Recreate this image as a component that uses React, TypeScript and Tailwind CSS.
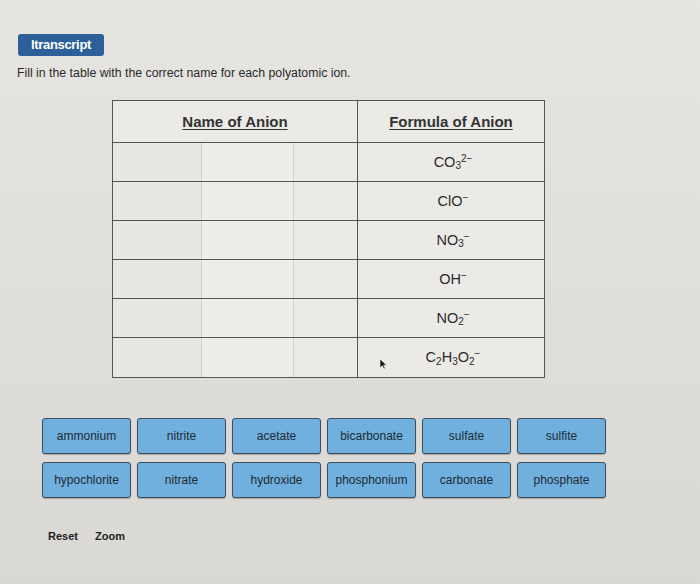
import React from "react";

const names = [
  ["ammonium", "nitrite", "acetate", "bicarbonate", "sulfate", "sulfite"],
  ["hypochlorite", "nitrate", "hydroxide", "phosphonium", "carbonate", "phosphate"],
];

const formulas: React.ReactNode[] = [
  <>CO<sub className="text-[10px]">3</sub><sup className="text-[10px]">2−</sup></>,
  <>ClO<sup className="text-[10px]">−</sup></>,
  <>NO<sub className="text-[10px]">3</sub><sup className="text-[10px]">−</sup></>,
  <>OH<sup className="text-[10px]">−</sup></>,
  <>NO<sub className="text-[10px]">2</sub><sup className="text-[10px]">−</sup></>,
  <>C<sub className="text-[10px]">2</sub>H<sub className="text-[10px]">3</sub>O<sub className="text-[10px]">2</sub><sup className="text-[10px]">−</sup></>,
];

export default function App() {
  return (
    <div className="w-[700px] h-[584px] bg-gradient-to-b from-[#e7e5e2] to-[#dad8d4] font-['Liberation_Sans',Arial,sans-serif] text-[#222] relative overflow-hidden">
      {/* HEADER */}
      <div className="pt-[32px] pl-[18px]">
        <div className="inline-flex items-center justify-center w-[86px] h-[22px] bg-[#2d5f98] rounded-[3px] text-white text-[13px] font-bold tracking-tight">
          ltranscript
        </div>
        <p className="mt-[8px] -ml-[1px] text-[12.3px] text-[#2a2a2a]">
          Fill in the table with the correct name for each polyatomic ion.
        </p>
      </div>

      {/* TABLE */}
      <div className="ml-[112px] mt-[18px] w-[433px] border border-[#555] bg-[#eceae7]">
        <div className="grid grid-cols-[245px_1fr] h-[42px] border-b border-[#555]">
          <div className="flex items-center justify-center border-r border-[#555]">
            <span className="text-[15px] font-semibold underline underline-offset-2 text-[#333]">
              Name of Anion
            </span>
          </div>
          <div className="flex items-center justify-center">
            <span className="text-[15px] font-semibold underline underline-offset-2 text-[#333]">
              Formula of Anion
            </span>
          </div>
        </div>
        {formulas.map((f, i) => (
          <div
            key={i}
            className={`grid grid-cols-[245px_1fr] h-[39px] ${i < 5 ? "border-b border-[#555]" : ""}`}
          >
            <div className="grid grid-cols-[88px_93px_1fr] border-r border-[#555]">
              <div className="bg-[#e8e7e4]" />
              <div className="bg-[#eeedea] border-x border-[#d2d0cc]" />
              <div className="bg-[#ebeae7]" />
            </div>
            <div className="relative flex items-center justify-center text-[14.5px] text-[#2a2a2a]">
              <span className="pl-[4px]">{f}</span>
              {i === 5 && (
                <svg className="absolute left-[21px] top-[20px]" width="9" height="12" viewBox="0 0 9 12">
                  <path d="M1 1 L1 10 L3.2 7.8 L5 11 L6.3 10.3 L4.6 7.2 L7.6 7.2 Z" fill="#111" stroke="#fff" strokeWidth="0.6" />
                </svg>
              )}
            </div>
          </div>
        ))}
      </div>

      {/* WORD BANK */}
      <div className="ml-[42px] mt-[40px] flex flex-col gap-[8px]">
        {names.map((row, r) => (
          <div key={r} className="flex gap-[6px]">
            {row.map((n) => (
              <div
                key={n}
                className="w-[89px] h-[36px] flex items-center justify-center bg-[#6fb0de] border border-[#3d4f5d] rounded-[3px] shadow-[0_1px_1px_rgba(0,0,0,0.25)] text-[12px] text-[#1f2a33]"
              >
                {n}
              </div>
            ))}
          </div>
        ))}
      </div>

      {/* FOOTER */}
      <div className="ml-[48px] mt-[30px] flex gap-[17px] text-[11px] font-bold text-[#222]">
        <span>Reset</span>
        <span>Zoom</span>
      </div>
    </div>
  );
}
